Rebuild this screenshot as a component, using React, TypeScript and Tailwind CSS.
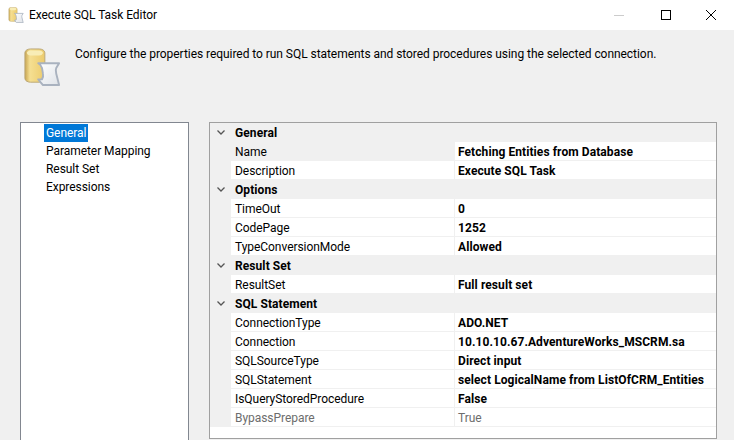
const sections = [
  {
    title: "General",
    rows: [
      ["Name", "Fetching Entities from Database"],
      ["Description", "Execute SQL Task"],
    ],
  },
  {
    title: "Options",
    rows: [
      ["TimeOut", "0"],
      ["CodePage", "1252"],
      ["TypeConversionMode", "Allowed"],
    ],
  },
  {
    title: "Result Set",
    rows: [["ResultSet", "Full result set"]],
  },
  {
    title: "SQL Statement",
    rows: [
      ["ConnectionType", "ADO.NET"],
      ["Connection", "10.10.10.67.AdventureWorks_MSCRM.sa"],
      ["SQLSourceType", "Direct input"],
      ["SQLStatement", "select LogicalName from ListOfCRM_Entities"],
      ["IsQueryStoredProcedure", "False"],
    ],
  },
];

function TaskIcon({ size }: { size: number }) {
  return (
    <svg width={size} height={size} viewBox="0 0 38 40" className="shrink-0">
      <defs>
        <linearGradient id={`can${size}`} x1="0" x2="1" y1="0" y2="0">
          <stop offset="0" stopColor="#c8a552" />
          <stop offset="0.25" stopColor="#f5df92" />
          <stop offset="1" stopColor="#eccb6c" />
        </linearGradient>
        <linearGradient id={`paper${size}`} x1="0" x2="1" y1="0" y2="1">
          <stop offset="0" stopColor="#ffffff" />
          <stop offset="1" stopColor="#dfe3e8" />
        </linearGradient>
      </defs>
      <path d="M1 5c0-2.500 3-4 6-4h9c3 0 6 1.500 6 4v27c0 2.500-3 4-6 4H7c-3 0-6-1.500-6-4z" fill={`url(#can${size})`} stroke="#b9a676" />
      <path d="M3 5c0-1.500 2-2.500 4-2.500h9c2 0 4 1 4 2.500s-2 3-4 3H7C5 8 3 6.500 3 5z" fill="#f8edb6" />
      <path d="M15 16h22l-3 5c-1 2-.5 4 0 6l3 12H20l-5-6h4c1-2 1.500-4 1-6l-1-6c-.5-2-2-4-4-5z" fill={`url(#paper${size})`} stroke="#a9b2bf" strokeWidth="2" strokeLinejoin="round" />
    </svg>
  );
}

function Chevron() {
  return (
    <svg width="8" height="5" viewBox="0 0 8 5" className="shrink-0">
      <path d="M.5.5 4 4 7.500.5" fill="none" stroke="#555" strokeWidth="1.300" />
    </svg>
  );
}

export default function App() {
  return (
    <div className="flex h-[440px] w-[734px] flex-col overflow-hidden bg-[#f0f0f0] font-['Roboto','Open_Sans',sans-serif] text-[12px] tracking-[-0.05px] text-black">
      <div className="flex h-[30px] items-center bg-white pl-2">
        <TaskIcon size={16} />
        <span className="ml-[5px] flex-1">Execute SQL Task Editor</span>
        <svg width="12" height="12" viewBox="0 0 12 12" className="mr-[34px]">
          <path d="M0 6.500h10" stroke="#ccc" />
        </svg>
        <svg width="12" height="12" viewBox="0 0 12 12" className="mr-[33px]">
          <rect x="1.500" y="1.500" width="9" height="9" fill="none" stroke="#000" />
        </svg>
        <svg width="12" height="12" viewBox="0 0 12 12" className="mr-[6px]">
          <path d="M1 1l10 10M11 1 1 11" stroke="#000" />
        </svg>
        <span className="w-[11px]" />
      </div>

      <div className="flex h-[92px] items-start pl-[23px]">
        <div className="mt-[18px]">
          <TaskIcon size={38} />
        </div>
        <p className="ml-[14px] mt-[15px] whitespace-nowrap">
          Configure the properties required to run SQL statements and stored procedures using the selected connection.
        </p>
      </div>

      <div className="flex h-[318px] gap-5 pl-5">
        <div className="w-[169px] border border-b-0 border-[#828790] bg-white pl-[23px] pt-[1px]">
          <div className="h-[18px] w-fit bg-[#0078d7] px-[2px] leading-[18px] text-white">General</div>
          <div className="h-[18px] px-[2px] leading-[18px]">Parameter Mapping</div>
          <div className="h-[18px] px-[2px] leading-[18px]">Result Set</div>
          <div className="h-[18px] px-[2px] leading-[18px]">Expressions</div>
        </div>

        <div className="mb-[1px] flex w-[508px] flex-col border border-[#a0a0a0] bg-white">
          {sections.map((s) => (
            <div key={s.title}>
              <div className="flex h-[19px] items-center bg-[#f0f0f0] font-bold tracking-[0.08px]">
                <span className="flex w-[25px] pl-[7px]"><Chevron /></span>
                <span>{s.title}</span>
              </div>
              {s.rows.map(([k, v]) => (
                <Row key={k} name={k} value={v} focused={k === "Name"} />
              ))}
            </div>
          ))}
          <Row name="BypassPrepare" value="True" disabled />
        </div>
      </div>
    </div>
  );
}

function Row({ name, value, disabled, focused }: { name: string; value: string; disabled?: boolean; focused?: boolean }) {
  return (
    <div className={`flex h-[19px] items-center border-b border-[#f0f0f0] bg-[#f0f0f0] ${disabled ? "text-[#6d6d6d]" : ""}`}>
      <div className={`ml-[21px] flex h-full flex-1 items-center ${focused ? "bg-[#f0f0f0]" : "bg-white"}`}>
        <span className="w-[223px] shrink-0 pl-[4px] pt-px">{name}</span>
        <span className={`flex h-full flex-1 items-center whitespace-nowrap border-l border-[#f0f0f0] bg-white pl-[3px] pt-px ${disabled ? "" : "font-bold tracking-[0.08px]"}`}>{value}</span>
      </div>
    </div>
  );
}
